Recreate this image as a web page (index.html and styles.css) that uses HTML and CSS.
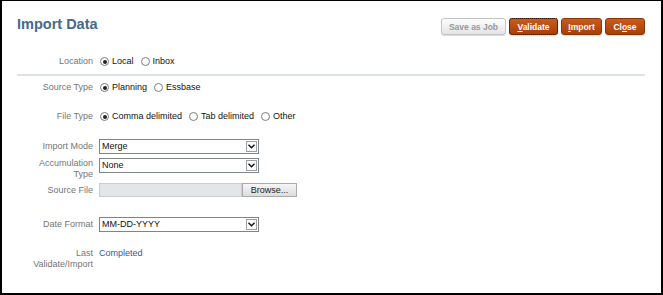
FILE: index.html
```html
<!DOCTYPE html>
<html lang="en">
<head>
  <meta charset="UTF-8">
  <meta name="viewport" content="width=device-width, initial-scale=1.0">
  <title>Import Data</title>
  <link rel="stylesheet" href="styles.css">
</head>
<body>
  <div class="frame">
  <div class="header">
    <h1>Import Data</h1>
    <div class="buttons">
      <button type="button" class="btn btn-light">Save as Job</button>
      <button type="button" class="btn btn-dark btn-focus"><u>V</u>alidate</button>
      <button type="button" class="btn btn-dark"><u>I</u>mport</button>
      <button type="button" class="btn btn-dark">Cl<u>o</u>se</button>
    </div>
  </div>

  <div class="row row-location">
    <div class="label">Location</div>
    <div class="radios">
      <span class="radio"><span class="dot checked"></span>Local</span>
      <span class="radio"><span class="dot"></span>Inbox</span>
    </div>
  </div>

  <div class="divider"></div>

  <div class="row row-source">
    <div class="label">Source Type</div>
    <div class="radios">
      <span class="radio"><span class="dot checked"></span>Planning</span>
      <span class="radio"><span class="dot"></span>Essbase</span>
    </div>
  </div>

  <div class="row row-filetype">
    <div class="label">File Type</div>
    <div class="radios">
      <span class="radio"><span class="dot checked"></span>Comma delimited</span>
      <span class="radio"><span class="dot"></span>Tab delimited</span>
      <span class="radio"><span class="dot"></span>Other</span>
    </div>
  </div>

  <div class="row row-mode">
    <div class="label label-select">Import Mode</div>
    <div class="select">
      <span class="select-value">Merge</span>
      <span class="select-arrow"><svg width="7" height="5" viewBox="0 0 7 5"><path d="M0.5 0.8 L3.5 3.8 L6.5 0.8" fill="none" stroke="#111" stroke-width="1.4"/></svg></span>
    </div>
  </div>

  <div class="row row-accum">
    <div class="label label-two">Accumulation<br>Type</div>
    <div class="select">
      <span class="select-value">None</span>
      <span class="select-arrow"><svg width="7" height="5" viewBox="0 0 7 5"><path d="M0.5 0.8 L3.5 3.8 L6.5 0.8" fill="none" stroke="#111" stroke-width="1.4"/></svg></span>
    </div>
  </div>

  <div class="row row-file">
    <div class="label label-file">Source File</div>
    <div class="file">
      <span class="file-input"></span>
      <span class="browse">Browse...</span>
    </div>
  </div>

  <div class="row row-date">
    <div class="label label-select">Date Format</div>
    <div class="select">
      <span class="select-value">MM-DD-YYYY</span>
      <span class="select-arrow"><svg width="7" height="5" viewBox="0 0 7 5"><path d="M0.5 0.8 L3.5 3.8 L6.5 0.8" fill="none" stroke="#111" stroke-width="1.4"/></svg></span>
    </div>
  </div>

  <div class="row row-last">
    <div class="label label-two">Last<br>Validate/Import</div>
    <div class="status">Completed</div>
  </div>
  </div>
</body>
</html>
```

FILE: styles.css
```css
body {
  margin: 0;
  font-family: 'Liberation Sans', Arial, sans-serif;
  font-size: 9px;
  color: #222;
  background: #fff;
}
.frame {
  width: 663px;
  height: 295px;
  box-sizing: border-box;
  border: 2px solid #000;
  border-top: 1px solid #000;
  padding: 0 16px 0 15px;
}
.header {
  display: flex;
  justify-content: space-between;
  align-items: flex-start;
  padding-top: 17px;
  height: 17px;
}
h1 {
  margin: 0;
  font-size: 14.5px;
  line-height: 13px;
  font-weight: bold;
  color: #46698b;
}
.buttons {
  display: flex;
  gap: 3px;
}
.btn {
  height: 17px;
  padding: 0;
  font-family: inherit;
  font-size: 8.5px;
  font-weight: bold;
  border-radius: 3px;
  box-shadow: 0 1px 1px rgba(0, 0, 0, 0.15);
}
.btn-light {
  width: 65px;
  background: linear-gradient(#fdfdfd, #e4e4e4);
  border: 1px solid #c2c4c6;
  color: #9a9a9a;
}
.btn-dark {
  background: linear-gradient(#c95c1c, #a83f07);
  border: 1px solid #8c3406;
  color: #fff;
}
.btn-focus {
  width: 49px;
  outline: 1px dotted #3a1400;
  outline-offset: -1px;
}
.btn-dark:nth-child(3) {
  width: 41px;
}
.btn-dark:nth-child(4) {
  width: 40px;
}
.row {
  display: flex;
  align-items: flex-start;
  gap: 6px;
}
.label {
  width: 76px;
  flex-shrink: 0;
  text-align: right;
  color: #767676;
  line-height: 11px;
}
.label-select {
  line-height: 15px;
}
.label-two {
  line-height: 10.5px;
}
.label-file {
  line-height: 14px;
}
.row-location {
  margin-top: 21px;
}
.divider {
  height: 2px;
  background: #dde3e5;
  margin-top: 7px;
}
.row-source {
  margin-top: 6px;
}
.row-filetype {
  margin-top: 18px;
}
.row-mode {
  margin-top: 17px;
}
.row-accum {
  margin-top: 4px;
}
.row-file {
  margin-top: 4px;
}
.row-date {
  margin-top: 20px;
}
.row-last {
  margin-top: 16px;
}
.radios {
  display: flex;
  gap: 7px;
  padding-left: 1px;
  line-height: 11px;
}
.radio {
  display: flex;
  align-items: center;
  color: #111;
}
.dot {
  width: 7px;
  height: 7px;
  border: 1px solid #7d7d7d;
  border-radius: 50%;
  margin-right: 3px;
  position: relative;
  background: #fff;
}
.dot.checked::after {
  content: '';
  position: absolute;
  left: 1.5px;
  top: 1.5px;
  width: 4px;
  height: 4px;
  border-radius: 50%;
  background: #222;
}
.select {
  width: 160px;
  height: 15px;
  box-sizing: border-box;
  border: 1px solid #7f8487;
  display: flex;
  align-items: center;
  background: #fff;
}
.select-value {
  flex: 1;
  padding-left: 2px;
  color: #111;
  line-height: 13px;
}
.select-arrow {
  width: 11px;
  height: 11px;
  margin-right: 1px;
  border: 1px solid #9aa0a4;
  box-sizing: border-box;
  display: flex;
  align-items: center;
  justify-content: center;
  background: #fafafa;
}
.file {
  display: flex;
  height: 14px;
}
.file-input {
  width: 143px;
  box-sizing: border-box;
  background: #e2e6e8;
  border: 1px solid #c9cdcf;
}
.browse {
  width: 55px;
  box-sizing: border-box;
  border: 1px solid #a8abad;
  background: linear-gradient(#f6f6f6, #dcdcdc);
  text-align: center;
  line-height: 12px;
  color: #222;
}
.status {
  color: #3a57a0;
  line-height: 10.5px;
}
```
